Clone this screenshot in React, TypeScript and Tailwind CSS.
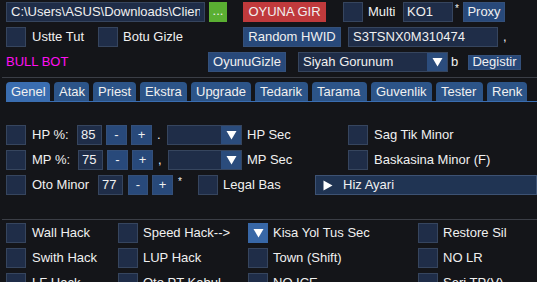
import React from 'react';

// ImGui-style bot panel
const Check = ({ className = '' }: { className?: string }) => (
  <div className={`h-5 w-5 shrink-0 border border-[#36455e] bg-[#1f2d48] ${className}`} />
);

const Input = ({ text, className = '' }: { text: string; className?: string }) => (
  <div className={`h-5 shrink-0 overflow-hidden whitespace-nowrap border border-[#36455e] bg-[#1f2d48] leading-[18px] ${className}`}>
    {text}
  </div>
);

const Btn = ({ text, className = '' }: { text: string; className?: string }) => (
  <div className={`flex h-5 shrink-0 items-center justify-center whitespace-nowrap ${className}`}>{text}</div>
);

const Label = ({ text, className = '' }: { text: string; className?: string }) => (
  <div className={`h-5 shrink-0 whitespace-nowrap leading-5 ${className}`}>{text}</div>
);

const DownTri = () => (
  <svg width="11" height="10" viewBox="0 0 11 10">
    <polygon points="0.5,1 10.5,1 5.5,9.5" fill="#ffffff" />
  </svg>
);

const Combo = ({ text = '', className = '' }: { text?: string; className?: string }) => (
  <div className={`flex h-5 shrink-0 border border-[#36455e] bg-[#1f2d48] ${className}`}>
    <div className="flex-1 overflow-hidden whitespace-nowrap pl-[4px] leading-[18px]">{text}</div>
    <div className="flex w-5 items-center justify-center bg-[#2b4c7c]">
      <DownTri />
    </div>
  </div>
);

const Sep = ({ className = '' }: { className?: string }) => (
  <div className={`ml-[2px] h-px bg-[#3b3e46] ${className}`} />
);

const tabs = [
  { label: 'Genel', w: 'w-[44px]' },
  { label: 'Atak', w: 'w-[35px]' },
  { label: 'Priest', w: 'w-[43px]' },
  { label: 'Ekstra', w: 'w-[47px]' },
  { label: 'Upgrade', w: 'w-[60px]' },
  { label: 'Tedarik', w: 'w-[53px]' },
  { label: 'Tarama', w: 'w-[55px]' },
  { label: 'Guvenlik', w: 'w-[61px]' },
  { label: 'Tester', w: 'w-[47px]' },
  { label: 'Renk', w: 'w-[40px]' },
];

const hacks = [
  ['Wall Hack', 'Speed Hack-->', 'Kisa Yol Tus Sec', 'Restore Sil'],
  ['Swith Hack', 'LUP Hack', 'Town (Shift)', 'NO LR'],
  ['LF Hack', 'Oto PT Kabul', 'NO ICE', 'Seri TP(V)'],
];

const btn = 'border border-[#34507a] bg-[#28497a]';

export default function App() {
  return (
    <div className="h-screen w-full overflow-hidden bg-[#141519] font-['Liberation_Sans',Arial,sans-serif] text-[13px] text-[#f0f0f0]">
      {/* top controls */}
      <div className="flex pl-[6px] pt-[2px]">
        <div className="h-5 w-[199px] shrink-0 border border-[#36455e] bg-[#1f2d48] pl-[4px]">
          <div className="w-[189px] overflow-hidden whitespace-nowrap leading-[18px]">C:\Users\ASUS\Downloads\Client\</div>
        </div>
        <Btn text="..." className="ml-[4px] w-[18px] bg-[#5aaf32] pb-[3px]" />
        <Btn text="OYUNA GIR" className="ml-[16px] w-[83px] bg-[#c03a3c]" />
        <Check className="ml-[17px]" />
        <Label text="Multi" className="ml-[5px] w-[35px]" />
        <Input text="KO1" className="w-[50px] pl-[3px]" />
        <Label text="*" className="w-[10px] pl-[2px] text-[10px] leading-[14px]" />
        <Btn text="Proxy" className={`w-[42px] ${btn}`} />
      </div>
      <div className="mt-[5px] flex pl-[6px]">
        <Check />
        <Label text="Ustte Tut" className="ml-[6px] w-[66px]" />
        <Check />
        <Label text="Botu Gizle" className="ml-[5px] w-[120px]" />
        <Btn text="Random HWID" className={`w-[98px] ${btn}`} />
        <Input text="S3TSNX0M310474" className="ml-[7px] w-[150px] pl-[4px]" />
        <Label text="," className="ml-[5px]" />
      </div>
      <div className="mt-[5px] flex items-center pl-[6px]">
        <Label text="BULL BOT" className="w-[202px] text-[#ff10f0]" />
        <Btn text="OyunuGizle" className={`w-[78px] ${btn}`} />
        <Combo text="Siyah Gorunum" className="ml-[12px] w-[150px]" />
        <Label text="b" className="ml-[3px] w-[17px]" />
        <div className={`flex h-[15px] w-[53px] items-center justify-center ${btn}`}>Degistir</div>
      </div>
      <Sep className="mt-[5px]" />

      {/* tabs */}
      <div className="mt-[4px] flex gap-[4px] pl-[6px]">
        {tabs.map((t, i) => (
          <div
            key={t.label}
            className={`h-[19px] shrink-0 rounded-t-[4px] pl-[5px] leading-[19px] ${t.w} ${
              i === 0 ? 'bg-[#3a6db0]' : 'bg-[#2c5488]'
            }`}
          >
            {t.label}
          </div>
        ))}
      </div>
      <div className="ml-[6px] h-px bg-[#3a6db0]" />

      {/* Genel page */}
      <div className="mt-[23px] flex pl-[6px]">
        <Check />
        <Label text="HP %:" className="ml-[6px] w-[45px]" />
        <Input text="85" className="w-[25px] pl-[3px]" />
        <Btn text="-" className={`ml-[4px] w-[21px] ${btn}`} />
        <Btn text="+" className={`ml-[4px] w-[21px] ${btn}`} />
        <Label text="." className="ml-[5px] w-[10px]" />
        <Combo className="w-[75px]" />
        <Label text="HP Sec" className="ml-[5px] w-[101px]" />
        <Check />
        <Label text="Sag Tik Minor" className="ml-[6px]" />
      </div>
      <div className="mt-[5px] flex pl-[6px]">
        <Check />
        <Label text="MP %:" className="ml-[6px] w-[46px]" />
        <Input text="75" className="w-[25px] pl-[3px]" />
        <Btn text="-" className={`ml-[4px] w-[21px] ${btn}`} />
        <Btn text="+" className={`ml-[4px] w-[21px] ${btn}`} />
        <Label text="," className="ml-[5px] w-[10px]" />
        <Combo className="w-[74px]" />
        <Label text="MP Sec" className="ml-[5px] w-[101px]" />
        <Check />
        <Label text="Baskasina Minor (F)" className="ml-[6px]" />
      </div>
      <div className="mt-[5px] flex pl-[6px]">
        <Check />
        <Label text="Oto Minor" className="ml-[6px] w-[66px]" />
        <Input text="77" className="w-[25px] pl-[3px]" />
        <Btn text="-" className={`ml-[5px] w-[20px] ${btn}`} />
        <Btn text="+" className={`ml-[4px] w-[21px] ${btn}`} />
        <Label text="*" className="ml-[5px] w-[20px] text-[10px] leading-[14px]" />
        <Check />
        <Label text="Legal Bas" className="ml-[5px] w-[92px]" />
        <div className="flex h-5 flex-1 items-center border border-[#3d5273] bg-[#203453]">
          <svg width="10" height="11" viewBox="0 0 10 11" className="ml-[7px]">
            <polygon points="0.5,0.5 9.5,5.5 0.5,10.5" fill="#ffffff" />
          </svg>
          <span className="ml-[10px]">Hiz Ayari</span>
        </div>
      </div>
      <Sep className="mt-[24px]" />

      <div className="mt-[3px] flex flex-col gap-[5px] pl-[6px]">
        {hacks.map((row, r) => (
          <div key={r} className="flex">
            <Check />
            <Label text={row[0]} className="ml-[6px] w-[86px]" />
            <Check />
            <Label text={row[1]} className="ml-[5px] w-[105px]" />
            {r === 0 ? (
              <div className="flex h-5 w-5 shrink-0 items-center justify-center bg-[#3867a6]">
                <DownTri />
              </div>
            ) : (
              <Check />
            )}
            <Label text={row[2]} className="ml-[5px] w-[145px]" />
            <Check />
            <Label text={row[3]} className="ml-[5px]" />
          </div>
        ))}
      </div>
    </div>
  );
}
